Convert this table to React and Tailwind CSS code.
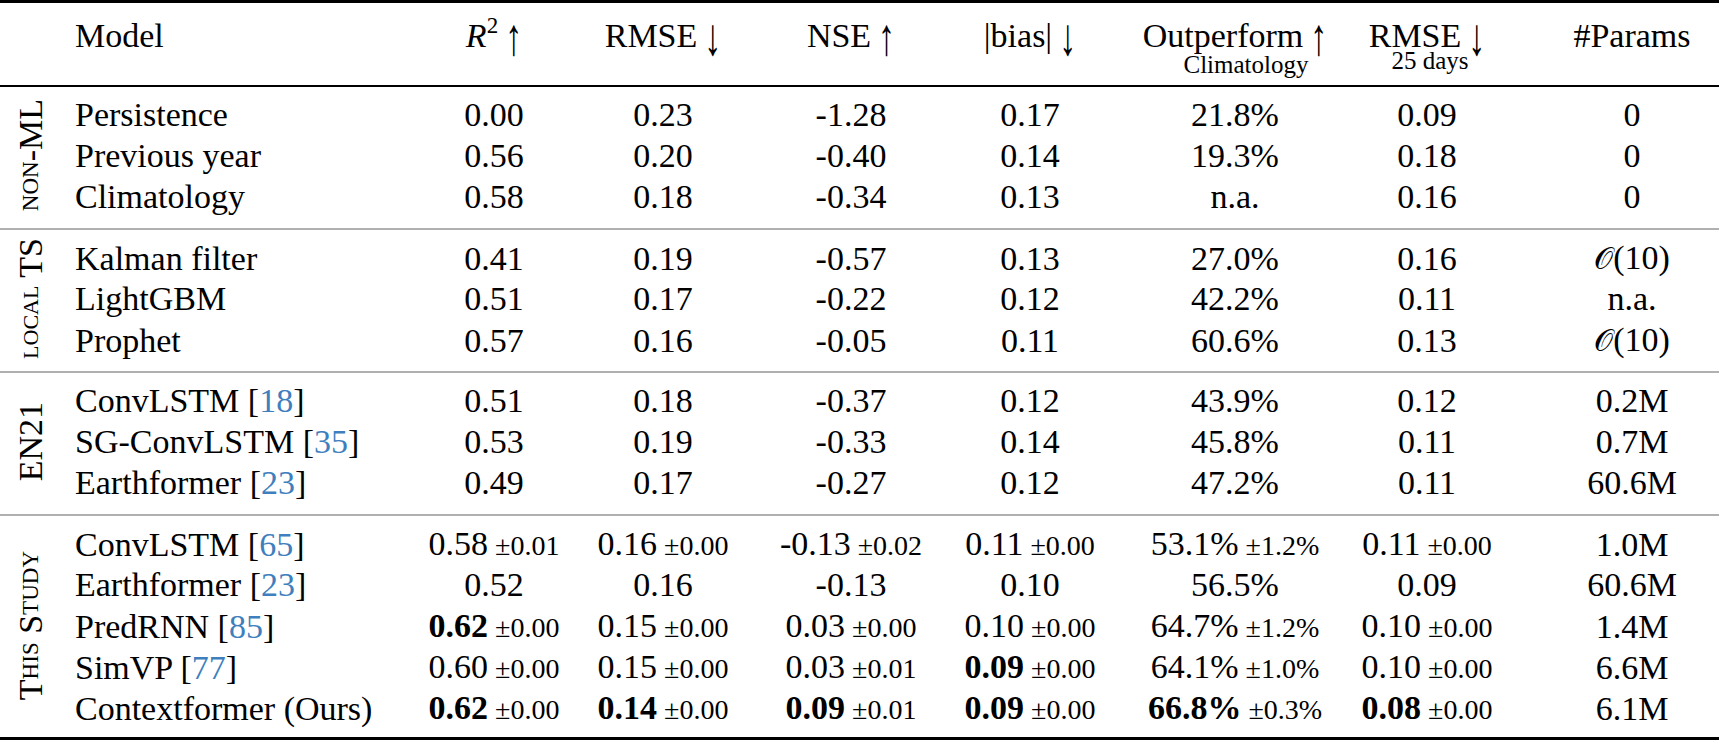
import React from "react";

const COLS =
  "grid grid-cols-[403px_58px_280px_96px_262px_148px_236px_174px] h-[41px] items-center";

const groups = [
  {
    label: (
      <>
        <span className="text-[23px]">NON</span>
        <span>-ML</span>
      </>
    ),
    pb: "pb-[11px]",
    rows: [
      ["Persistence", null, "0.00", "0.23", "-1.28", "0.17", "21.8%", "0.09", "0"],
      ["Previous year", null, "0.56", "0.20", "-0.40", "0.14", "19.3%", "0.18", "0"],
      ["Climatology", null, "0.58", "0.18", "-0.34", "0.13", "n.a.", "0.16", "0"],
    ],
  },
  {
    label: (
      <>
        <span className="text-[22px]">LOCAL</span>
        <span> TS</span>
      </>
    ),
    pb: "pb-[11px]",
    rows: [
      ["Kalman filter", null, "0.41", "0.19", "-0.57", "0.13", "27.0%", "0.16", "O10"],
      ["LightGBM", null, "0.51", "0.17", "-0.22", "0.12", "42.2%", "0.11", "n.a."],
      ["Prophet", null, "0.57", "0.16", "-0.05", "0.11", "60.6%", "0.13", "O10"],
    ],
  },
  {
    label: <span>EN21</span>,
    pb: "pb-[11px]",
    rows: [
      ["ConvLSTM", "18", "0.51", "0.18", "-0.37", "0.12", "43.9%", "0.12", "0.2M"],
      ["SG-ConvLSTM", "35", "0.53", "0.19", "-0.33", "0.14", "45.8%", "0.11", "0.7M"],
      ["Earthformer", "23", "0.49", "0.17", "-0.27", "0.12", "47.2%", "0.11", "60.6M"],
    ],
  },
  {
    label: (
      <>
        <span>T</span>
        <span className="text-[23px]">HIS</span>
        <span> S</span>
        <span className="text-[23px]">TUDY</span>
      </>
    ),
    pb: "pb-[9px]",
    rows: [
      ["ConvLSTM", "65", ["0.58", "0.01"], ["0.16", "0.00"], ["-0.13", "0.02"], ["0.11", "0.00"], ["53.1%", "1.2%"], ["0.11", "0.00"], "1.0M"],
      ["Earthformer", "23", "0.52", "0.16", "-0.13", "0.10", "56.5%", "0.09", "60.6M"],
      ["PredRNN", "85", ["0.62", "0.00", true], ["0.15", "0.00"], ["0.03", "0.00"], ["0.10", "0.00"], ["64.7%", "1.2%"], ["0.10", "0.00"], "1.4M"],
      ["SimVP", "77", ["0.60", "0.00"], ["0.15", "0.00"], ["0.03", "0.01"], ["0.09", "0.00", true], ["64.1%", "1.0%"], ["0.10", "0.00"], "6.6M"],
      ["Contextformer (Ours)", null, ["0.62", "0.00", true], ["0.14", "0.00", true], ["0.09", "0.01", true], ["0.09", "0.00", true], ["66.8%", "0.3%", true], ["0.08", "0.00", true], "6.1M"],
    ],
  },
];

function Value({ v }) {
  if (v === "O10") {
    return (
      <span>
        <span className="font-['DejaVu_Serif',serif] text-[30px]">𝒪</span>(10)
      </span>
    );
  }
  if (typeof v === "string") return <span>{v}</span>;
  const [main, pm, bold] = v;
  return (
    <span>
      <span className={bold ? "font-bold" : ""}>{main}</span>
      <span className="text-[28px]"> ±{pm}</span>
    </span>
  );
}

function Row({ row }) {
  const [name, cite, ...vals] = row;
  return (
    <div className={COLS}>
      <div className="pl-[13px] whitespace-nowrap">
        {name}
        {cite && (
          <>
            {" "}[<span className="text-[#3f7fbd]">{cite}</span>]
          </>
        )}
      </div>
      {vals.map((v, i) => (
        <div key={i} className="flex justify-center whitespace-nowrap">
          <Value v={v} />
        </div>
      ))}
    </div>
  );
}

// tall thin arrow like the math \uparrow / \downarrow
function Arrow({ up }) {
  return (
    <span className="inline-block ml-[7px] scale-y-[1.55] translate-y-[2px]">
      {up ? "↑" : "↓"}
    </span>
  );
}

function Head({ children, sub, subClass }) {
  return (
    <div className="flex flex-col items-center whitespace-nowrap">
      <div className="h-[41px] flex items-center">{children}</div>
      {sub && <div className={"text-[25px] leading-[25px] " + subClass}>{sub}</div>}
    </div>
  );
}

export default function App() {
  return (
    <div className="w-[1719px] bg-white text-black font-['Liberation_Serif',serif] text-[34px] leading-[41px]">
      <div className="h-[3px] bg-black" />
      <div className="h-[82px] pt-[12px] flex">
        <div className="w-[62px]" />
        <div className="grid grid-cols-[403px_58px_280px_96px_262px_148px_236px_174px] items-start">
          <div className="pl-[13px] h-[41px] flex items-center">Model</div>
          <Head>
            <span className="italic">R</span>
            <span className="text-[23px] relative -top-[10px]">2</span>
            <Arrow up />
          </Head>
          <Head>
            RMSE
            <Arrow />
          </Head>
          <Head>
            NSE
            <Arrow up />
          </Head>
          <Head>
            |bias|
            <Arrow />
          </Head>
          <Head sub="Climatology" subClass="-mt-[4px] ml-[22px]">
            Outperform
            <Arrow up />
          </Head>
          <Head sub="25 days" subClass="-mt-[8px] ml-[6px]">
            RMSE
            <Arrow />
          </Head>
          <Head>#Params</Head>
        </div>
      </div>
      <div className="h-[2px] bg-black" />
      {groups.map((g, gi) => (
        <div key={gi}>
          {gi > 0 && <div className="h-[2px] bg-[#b0b0b0]" />}
          <div className={"flex pt-[7px] " + g.pb}>
            <div className="w-[62px] flex items-center justify-center">
              <div className="[writing-mode:vertical-rl] rotate-180 leading-[34px] whitespace-nowrap">
                {g.label}
              </div>
            </div>
            <div className="flex flex-col">
              {g.rows.map((r, ri) => (
                <Row key={ri} row={r} />
              ))}
            </div>
          </div>
        </div>
      ))}
      <div className="h-[3px] bg-black" />
    </div>
  );
}
